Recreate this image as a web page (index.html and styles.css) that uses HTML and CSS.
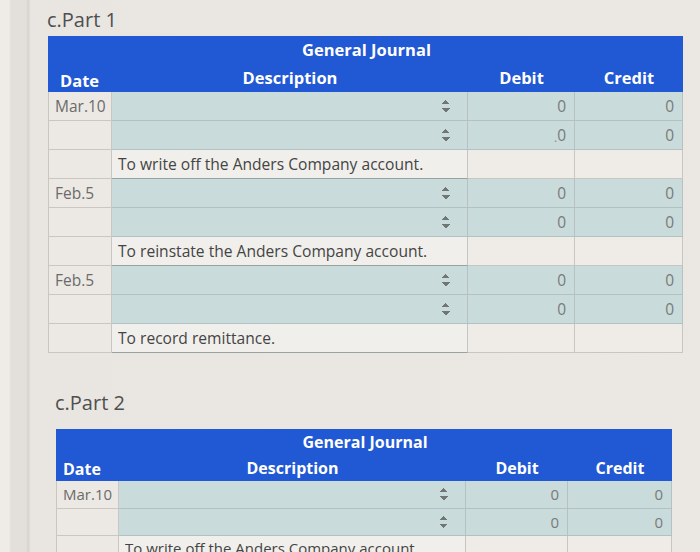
FILE: index.html
```html
<!DOCTYPE html>
<html lang="en">
<head>
<meta charset="utf-8">
<title>General Journal</title>
<link rel="stylesheet" href="styles.css">
</head>
<body>
<div class="page">
  <section class="part part-one">
    <h2 class="part-title">c.Part 1</h2>
    <div class="journal">
      <div class="journal-head">
        <div class="head-title">General Journal</div>
        <div class="head-label head-date">Date</div>
        <div class="head-label head-desc">Description</div>
        <div class="head-label">Debit</div>
        <div class="head-label">Credit</div>
      </div>

      <div class="cell date">Mar.10</div>
      <div class="cell input desc"><span class="spin"></span></div>
      <div class="cell input num">0</div>
      <div class="cell input num">0</div>

      <div class="cell date"></div>
      <div class="cell input desc"><span class="spin"></span></div>
      <div class="cell input num"><span class="dot">.</span>0</div>
      <div class="cell input num">0</div>

      <div class="cell date"></div>
      <div class="cell memo">To write off the Anders Company account.</div>
      <div class="cell blank"></div>
      <div class="cell blank"></div>

      <div class="cell date">Feb.5</div>
      <div class="cell input desc"><span class="spin"></span></div>
      <div class="cell input num">0</div>
      <div class="cell input num">0</div>

      <div class="cell date"></div>
      <div class="cell input desc"><span class="spin"></span></div>
      <div class="cell input num">0</div>
      <div class="cell input num">0</div>

      <div class="cell date"></div>
      <div class="cell memo">To reinstate the Anders Company account.</div>
      <div class="cell blank"></div>
      <div class="cell blank"></div>

      <div class="cell date">Feb.5</div>
      <div class="cell input desc"><span class="spin"></span></div>
      <div class="cell input num">0</div>
      <div class="cell input num">0</div>

      <div class="cell date"></div>
      <div class="cell input desc"><span class="spin"></span></div>
      <div class="cell input num">0</div>
      <div class="cell input num">0</div>

      <div class="cell date"></div>
      <div class="cell memo">To record remittance.</div>
      <div class="cell blank"></div>
      <div class="cell blank"></div>
    </div>
  </section>

  <section class="part part-two">
    <h2 class="part-title">c.Part 2</h2>
    <div class="journal">
      <div class="journal-head">
        <div class="head-title">General Journal</div>
        <div class="head-label head-date">Date</div>
        <div class="head-label head-desc">Description</div>
        <div class="head-label">Debit</div>
        <div class="head-label">Credit</div>
      </div>

      <div class="cell date">Mar.10</div>
      <div class="cell input desc"><span class="spin"></span></div>
      <div class="cell input num">0</div>
      <div class="cell input num">0</div>

      <div class="cell date"></div>
      <div class="cell input desc"><span class="spin"></span></div>
      <div class="cell input num">0</div>
      <div class="cell input num">0</div>

      <div class="cell date"></div>
      <div class="cell memo memo-cut">To write off the Anders Company account.</div>
      <div class="cell blank"></div>
      <div class="cell blank"></div>
    </div>
  </section>
</div>
</body>
</html>
```

FILE: styles.css
```css
html, body {
  margin: 0;
  height: 100%;
}

body {
  width: 700px;
  height: 552px;
  overflow: hidden;
  font-family: "Open Sans", "Noto Sans", "Liberation Sans", sans-serif;
  color: #555;
  background:
    linear-gradient(to right,
      #efece8 0, #efece8 9px,
      #e3e0db 11px, #e3e0db 26px,
      #d6d3ce 28px, #e9e6e1 31px, #ebe8e3 100%);
}

.page {
  padding: 8px 0 0 47px;
}

.part-title {
  margin: 0;
  font-size: 20px;
  font-weight: 400;
  line-height: 24px;
  color: #4f4f4f;
}

.part-two {
  margin-top: 38px;
  padding-left: 8px;
}

.journal {
  --cols: 64px 356px 107px 108px;
  --head-h: 56px;
  --row-h: 29px;
  --fs: 15.5px;
  --memo-fs: 15.6px;
  display: grid;
  grid-template-columns: var(--cols);
  margin-top: 4px;
  margin-left: 1px;
}

.part-two .journal {
  --cols: 63px 347px 102px 104px;
  --head-h: 52px;
  --row-h: 27.5px;
  --fs: 15px;
  --memo-fs: 15px;
  margin-top: 14px;
}

.journal-head {
  grid-column: 1 / -1;
  display: grid;
  grid-template-columns: var(--cols);
  grid-template-rows: 28px 1fr;
  height: var(--head-h);
  background: #2158d3;
  color: #fff;
  font-weight: 700;
  font-size: 16.5px;
}

.part-two .journal-head {
  grid-template-rows: 26px 1fr;
  font-size: 16px;
}

.head-title {
  grid-column: 1 / -1;
  text-align: center;
  align-self: center;
  line-height: 20px;
  padding-left: 2px;
}

.head-label {
  text-align: center;
  line-height: 20px;
  align-self: center;
}

.head-date {
  text-align: left;
  padding-left: 12px;
  padding-top: 5px;
}

.part-two .head-date {
  padding-left: 7px;
  padding-top: 1px;
}

.cell {
  box-sizing: border-box;
  height: var(--row-h);
  border-right: 1px solid #c3c6c3;
  border-bottom: 1px solid #c3c6c3;
  font-size: var(--fs);
  line-height: 20px;
  display: flex;
  align-items: center;
}

.date {
  background: #ece9e4;
  color: #6b6b6b;
  padding-left: 6px;
  border-left: 1px solid #cac7c2;
  border-right-color: #cac7c2;
  border-bottom-color: #cac7c2;
}

.input {
  background: #c9dbdb;
  border-bottom-color: #b2c1c1;
  border-right-color: #b6c2c2;
}

.desc {
  justify-content: flex-end;
  padding-right: 17px;
}

.num {
  justify-content: flex-end;
  padding-right: 8px;
  color: #7a7a7a;
}

.dot {
  font-size: 12px;
  margin-top: 6px;
  color: #8a8a8a;
}

.memo {
  background: #f1efeb;
  color: #444;
  padding-left: 6px;
  font-size: var(--memo-fs);
  border-bottom-color: #9aa1a1;
}

.memo-cut {
  align-items: flex-start;
  padding-top: 2px;
}

.blank {
  background: #efece8;
  border-right-color: #c8c6c2;
  border-bottom-color: #c8c6c2;
}

.spin {
  width: 8px;
  height: 12px;
  display: block;
  background:
    linear-gradient(to bottom right, transparent 50%, #707674 50%) left 0 / 4px 4px no-repeat,
    linear-gradient(to bottom left, transparent 50%, #707674 50%) right 0 / 4px 4px no-repeat,
    linear-gradient(to top right, transparent 50%, #707674 50%) left 8px / 4px 4px no-repeat,
    linear-gradient(to top left, transparent 50%, #707674 50%) right 8px / 4px 4px no-repeat;
}
```
